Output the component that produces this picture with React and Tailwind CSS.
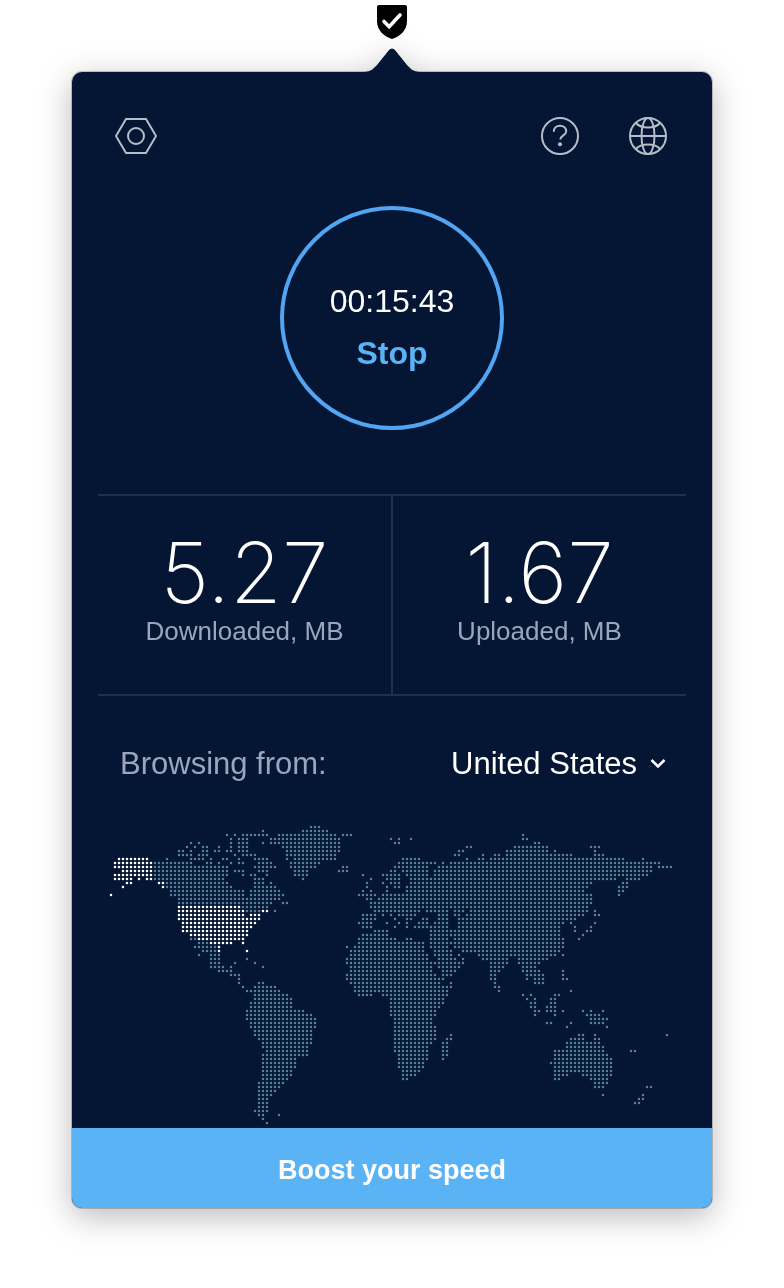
import React from 'react';

// Each row of the map is a list of dot columns: "a-b" is a run, "n" a single dot
const LAND = [
  '50-52', '38 48-54', '29 31 33-39 42-56 58-60 103', '30 32-34 40-57 70 72 75 103-104',
  '20 22 30 32-34 38 40-57 71-72 106-107', '19 21 23-24 27 30 32-34 43-57 89-90 101-109 120-122',
  '17-18 20 23-24 26-27 29-30 32-34 44-57 87-88 99-109 111 121', '17-20 22-24 31 33-36 44-56 86-87 93 96-97 99-115 121-123',
  '14 20-23 25 28-29 32 36-39 44 46-56 73-77 89 92-93 95-128 133', '11-20 24-25 27 30 32-33 37-40 45-52 72-81 83 85-137',
  '11-29 36-41 45-51 58-59 71-79 82-135 137-140', '11-29 31-33 37-39 46-49 57-59 70-71 73-79 81-135',
  '11-29 33 35-36 39 46-49 63 68-72 74-79 81-134', '11-28 36-38 48 65 69-72 75-126 129-132',
  '14-29 36-38 40 64 68 70-72 75-120 128-129', '14-30 36-41 64 69 71-72 74-119 127-129',
  '15-33 35-42 63 65 69 74-118 127-128', '15-33 35-43 62-66 68-73 74-120 127', '17-42 64-65 67-120', '17-40 43-44 65-120',
  '33-39 65-119', '34-37 41 66-77 79-84 86-88 90-119 121', '63-66 68 70 72-76 82-84 86-87 89-118 121-122',
  '63-66 71 74-75 78-79 82-84 87-116', '62-65 69 72 74 77-79 81-84 87-113 115 121', '63-65 71 74 76-84 87-112 116 120',
  '66-69 80-112 116 119-120', '63-69 80-112 118', '20-21 62-71 74-75 80-84 86-113 117', '22-24 62-78 80-113',
  '21-26 59 61-78 80-84 86-113', '23-26 60-78 81-85 88-112', '22 25-27 60-79 81-85 87 92-111 113', '25-27 34 59-79 82-86 88 93-99 102-109',
  '25-27 31 36 59-88 95-99 102-107', '25-28 30 38 60-80 82-87 95-98 103-106', '27-30 60-80 83-86 95-97 103-107 113', '30-32 59-81 83-85 95-96 104-108 113',
  '32 59-83 95-96 104 106-108 113-114', '32 37-38 60-82 85 96 106-108', '33 36-41 61-85 96-97', '34-42 61-84 97 115',
  '36-44 62-65 68-84 103 105 111-112', '36-45 70-83 104 106 110-111', '35-45 70-83 105-106 110-111', '35-45 70-82 105-106 109-111',
  '34-48 70-81 106-107 109-111 113 118 120 123', '34-50 70-81 106 111 119-122', '34-51 71-80 120-124', '35-51 71-80 109-110 115 120-123',
  '35-51 71-81 114 124', '36-50 71-81', '36-50 71-81 85 117-118 121 139', '37-50 71-81 84-85 115-118 121-122',
  '38-50 71-80 83-84 114-122', '38-49 71-79 83-84 114-123', '39-49 71-79 83-84 111-123 130-131', '38-49 72-79 83-84 111-124',
  '38-46 72-79 83 111-125', '38-46 72-78 110-125', '38-46 72-78 111-125', '38-45 73-77 111-125',
  '38-45 73-76 111-114 118-125', '38-44 73-74 111-112 120-124', '37-43 121-124', '37-42 121-123 134-135',
  '37-41', '37-40 123 133', '37-39 132-133', '37-39 131-132', '37-39', '36-39', '37-38 42', '38', '39',
];

const UNITED_STATES = [
  '', '', '', '', '', '', '', '', '2-9', '1-10', '1-10', '3-10', '1-10', '1-5 7 9-10', '4-5 12-13', '3 13',
  '', '0', '', '', '17-32', '17-33 38-39', '17-33 35-37', '17-37', '18-36', '18-35', '18-34', '20-34', '22-33', '25-30 33', '27', '27 34',
];

function dots(rows) {
  return rows
    .map((row, y) =>
      row.split(' ').filter(Boolean).map((run) => {
        const [from, to = from] = run.split('-').map(Number);
        let d = '';
        for (let x = from; x <= to; x++) d += `M${x * 4 + 3} ${y * 4 + 3}h.01`;
        return d;
      }).join('')
    )
    .join('');
}

function WorldMap() {
  return (
    <svg viewBox="0 0 568 304" className="block w-full" fill="none" strokeLinecap="round" aria-hidden="true">
      <path d={dots(LAND)} stroke="#587f9a" strokeWidth="2.5" />
      <path d={dots(UNITED_STATES)} stroke="#ffffff" strokeWidth="2.6" />
    </svg>
  );
}

function Stat({ value, label }) {
  return (
    <div className="flex flex-1 flex-col items-center pt-[35px]">
      <div className="font-[Inter] text-[84px] leading-[84px] font-extralight text-white">{value}</div>
      <div className="text-[26px] leading-8 text-[#9ba5bd]">{label}</div>
    </div>
  );
}

export default function App() {
  return (
    <div className="bg-white px-[72px] pt-1 pb-20 font-['Liberation_Sans',Arial,sans-serif]">
      <svg className="mx-auto block h-9 w-8" viewBox="0 0 32 36" aria-hidden="true">
        <path d="M3 1h26q2 0 2 2v14c0 9-6 15-15 18C7 32 1 26 1 17V3q0-2 2-2z" fill="#000" />
        <path d="M8 17.500l5.200 5.200L24 11" fill="none" stroke="#fff" strokeWidth="3.600" strokeLinecap="round" />
      </svg>

      <div className="mt-2 drop-shadow-[0_8px_16px_rgba(0,0,0,0.28)]">
        <svg className="mx-auto block h-6 w-14" viewBox="0 0 56 24" aria-hidden="true">
          <path d="M0 24c7 0 10-4 13-7L25 2q3-3 6 0l12 15c3 3 6 7 13 7z" fill="#041633" />
        </svg>

        <main className="overflow-hidden rounded-[10px] bg-[#041633] ring-1 ring-black/20">
          <header className="flex items-center justify-between pt-[43px] pr-11 pl-[43px]">
            <button aria-label="Settings" className="text-[#b5bdc9]">
              <svg className="block size-[42px]" viewBox="0 0 42 42" fill="none" stroke="currentColor" strokeWidth="2">
                <path d="M11 4h20l10 17-10 17H11L1 21z" />
                <circle cx="21" cy="21" r="8" />
              </svg>
            </button>
            <div className="flex gap-12 text-[#b5bdc9]">
              <button aria-label="Help">
                <svg className="block size-10" viewBox="0 0 40 40" fill="none" stroke="currentColor" strokeWidth="2">
                  <circle cx="20" cy="20" r="18" />
                  <path d="M13.800 15.800c0-3.900 2.700-6 6.200-6s6.200 2.100 6.200 5.600c0 4-5.900 4-5.900 8.200" />
                  <circle cx="20" cy="28.200" r="2" fill="currentColor" stroke="none" />
                </svg>
              </button>
              <button aria-label="Language">
                <svg className="block size-10" viewBox="0 0 40 40" fill="none" stroke="currentColor" strokeWidth="2">
                  <circle cx="20" cy="20" r="18" />
                  <ellipse cx="20" cy="20" rx="6.500" ry="18" />
                  <path d="M2 20h36M8 7c5 6 19 6 24 0M8 33c5-6 19-6 24 0" />
                </svg>
              </button>
            </div>
          </header>

          <button className="mx-auto mt-[49px] flex size-56 flex-col items-center justify-center gap-4 rounded-full border-4 border-[#51a5f2] pt-[18px]">
            <span className="text-[32px] leading-9 text-white">00:15:43</span>
            <span className="text-[32px] leading-9 font-bold text-[#5ab3f5]">Stop</span>
          </button>

          <section className="mx-[26px] mt-16 flex h-[202px] divide-x-2 divide-[#202f4b] border-y-2 border-[#202f4b]">
            <Stat value="5.27" label="Downloaded, MB" />
            <Stat value="1.67" label="Uploaded, MB" />
          </section>

          <div className="flex items-center justify-between pt-12 pr-[46px] pl-12">
            <label htmlFor="country" className="text-[31px] leading-10 text-[#9ba5bd]">Browsing from:</label>
            <div className="relative text-white">
              <select id="country" className="block appearance-none bg-transparent pr-7 text-[31px] leading-10 outline-none">
                <option>United States</option>
              </select>
              <svg className="pointer-events-none absolute top-3 right-0 h-4 w-4" viewBox="0 0 16 16" fill="none" stroke="currentColor" strokeWidth="2.500">
                <path d="M1.500 4L8 10.500 14.500 4" />
              </svg>
            </div>
          </div>

          <div className="px-9 pt-10">
            <WorldMap />
          </div>

          <button className="block h-20 w-full bg-[#5ab3f5] pt-1 text-[27px] font-bold text-white">Boost your speed</button>
        </main>
      </div>
    </div>
  );
}
